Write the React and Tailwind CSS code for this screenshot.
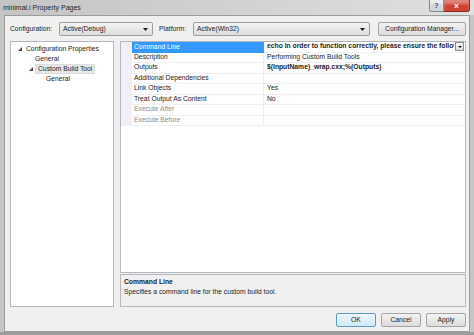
import React from 'react'

const rows = [
  { name: 'Command Line', value: 'echo In order to function correctly, please ensure the following environment variables are set', bold: true, selected: true },
  { name: 'Description', value: 'Performing Custom Build Tools' },
  { name: 'Outputs', value: '$(InputName)_wrap.cxx;%(Outputs)', bold: true },
  { name: 'Additional Dependencies', value: '' },
  { name: 'Link Objects', value: 'Yes' },
  { name: 'Treat Output As Content', value: 'No' },
  { name: 'Execute After', value: '', disabled: true },
  { name: 'Execute Before', value: '', disabled: true },
]

function Arrow() {
  return (
    <svg width="5" height="3" viewBox="0 0 5 3" className="shrink-0">
      <path d="M0 0h5L2.5 3z" fill="#1a1a1a" />
    </svg>
  )
}

function Expander() {
  return (
    <svg width="4" height="4" viewBox="0 0 4 4" className="shrink-0">
      <path d="M4 0v4H0z" fill="#4a4a4a" />
    </svg>
  )
}

function Combo({ text, width }) {
  return (
    <div
      className={`h-[14px] ${width} flex items-center rounded-[2px] border border-[#9d9d9d] bg-gradient-to-b from-[#f3f3f3] to-[#dddddd] pl-[3px] pr-[4px]`}
    >
      <span className="flex-1">{text}</span>
      <Arrow />
    </div>
  )
}

function Button({ children, primary }) {
  return (
    <div
      className={
        primary
          ? 'h-[14px] w-[40px] flex items-center justify-center rounded-[2px] border border-[#5a9ac6] bg-gradient-to-b from-[#eef7fd] to-[#cfe8f6]'
          : 'h-[14px] w-[40px] flex items-center justify-center rounded-[2px] border border-[#a3a3a3] bg-gradient-to-b from-[#f3f3f3] to-[#dcdcdc]'
      }
    >
      {children}
    </div>
  )
}

export default function App() {
  return (
    <div className="w-[474px] h-[335px] overflow-hidden flex flex-col bg-[#c6c6c6] font-['Liberation_Sans',Arial,sans-serif] text-[6.75px] leading-none text-[#1b1b1b]">
      {/* title bar */}
      <div className="h-[15px] shrink-0 flex items-start bg-gradient-to-r from-[#c4c4c4] via-[#d2d2d2] to-[#e0e0e0]">
        <span className="pl-[3px] pt-[4px] text-[7px] text-[#262626]">minimal.i Property Pages</span>
        <div className="ml-auto mr-[4px] flex">
          <div className="h-[12px] w-[15px] flex items-center justify-center rounded-bl-[3px] border border-t-0 border-[#7f8896] bg-[#d0d5de] shadow-[inset_0_4px_3px_rgba(255,255,255,0.6)] text-[7px] font-bold text-[#3f4c60]">
            ?
          </div>
          <div className="h-[12px] w-[26px] flex items-center justify-center rounded-br-[3px] border border-t-0 border-l-0 border-[#8a2a22] bg-[#cd4233] shadow-[inset_0_4px_3px_rgba(255,255,255,0.35)] text-[8px] font-bold text-white">
            x
          </div>
        </div>
      </div>

      {/* client area */}
      <div className="mx-[4px] flex-1 flex flex-col border border-[#9c9c9c] bg-[#f0f0f0] pl-[5px] pr-[3px] pt-[6px]">
        {/* config row */}
        <div className="flex items-center h-[14px]">
          <span className="w-[49px]">Configuration:</span>
          <Combo text="Active(Debug)" width="w-[94px]" />
          <span className="ml-[6px] w-[34px]">Platform:</span>
          <Combo text="Active(Win32)" width="w-[177px]" />
          <div className="ml-[8px] h-[14px] w-[88px] flex items-center justify-center rounded-[2px] border border-[#a3a3a3] bg-gradient-to-b from-[#f3f3f3] to-[#dcdcdc]">
            Configuration Manager...
          </div>
        </div>

        {/* main */}
        <div className="mt-[5px] h-[266px] flex gap-[6px]">
          {/* tree */}
          <div className="w-[104px] border border-[#b4b8bc] bg-white pt-[2px]">
            <div className="h-[10px] flex items-center pl-[7px] gap-[4px]">
              <Expander />
              <span>Configuration Properties</span>
            </div>
            <div className="h-[10px] flex items-center pl-[24px]">General</div>
            <div className="h-[10px] flex items-center pl-[18px] gap-[2px]">
              <Expander />
              <span className="h-[10px] flex items-center px-[2px] bg-[#e8e8e8] border border-[#dcdcdc]">Custom Build Tool</span>
            </div>
            <div className="h-[10px] flex items-center pl-[35px]">General</div>
          </div>

          {/* property grid + description */}
          <div className="w-[346px] flex flex-col gap-[1px]">
            <div className="h-[232px] border border-[#b4b8bc] bg-white">
              {rows.map((r) => (
                <div key={r.name} className="h-[10.5px] flex">
                  <div className="w-[11px] bg-[#f0f0f6]" />
                  <div
                    className={
                      r.selected
                        ? 'w-[132px] flex items-center pl-[2px] bg-[#3399ff] text-white'
                        : r.disabled
                          ? 'w-[132px] flex items-center pl-[2px] border-b border-r border-[#efefef] text-[#8c8c8c]'
                          : 'w-[132px] flex items-center pl-[2px] border-b border-r border-[#efefef]'
                    }
                  >
                    {r.name}
                  </div>
                  <div
                    className={
                      r.bold
                        ? 'flex-1 min-w-0 flex items-center pl-[3px] border-b border-[#efefef] font-bold'
                        : 'flex-1 min-w-0 flex items-center pl-[3px] border-b border-[#efefef]'
                    }
                  >
                    <span className="flex-1 overflow-hidden whitespace-nowrap">{r.value}</span>
                    {r.selected && (
                      <div className="mx-[1px] h-[9px] w-[9px] shrink-0 flex items-center justify-center border border-[#8e8e8e] bg-gradient-to-b from-[#f6f6f6] to-[#dedede]">
                        <svg width="4" height="2" viewBox="0 0 4 2">
                          <path d="M0 0h4L2 2z" fill="#1a1a1a" />
                        </svg>
                      </div>
                    )}
                  </div>
                </div>
              ))}
            </div>
            <div className="flex-1 border border-[#b4b8bc] bg-[#f0f0f0] pl-[3px] pt-[4px]">
              <div className="font-bold">Command Line</div>
              <div className="mt-[3px]">Specifies a command line for the custom build tool.</div>
            </div>
          </div>
        </div>

        {/* buttons */}
        <div className="mt-[6px] flex justify-end gap-[5px]">
          <Button primary>OK</Button>
          <Button>Cancel</Button>
          <Button>Apply</Button>
        </div>
      </div>
      <div className="h-[3px] shrink-0 bg-[#9d9d9d]" />
    </div>
  )
}
